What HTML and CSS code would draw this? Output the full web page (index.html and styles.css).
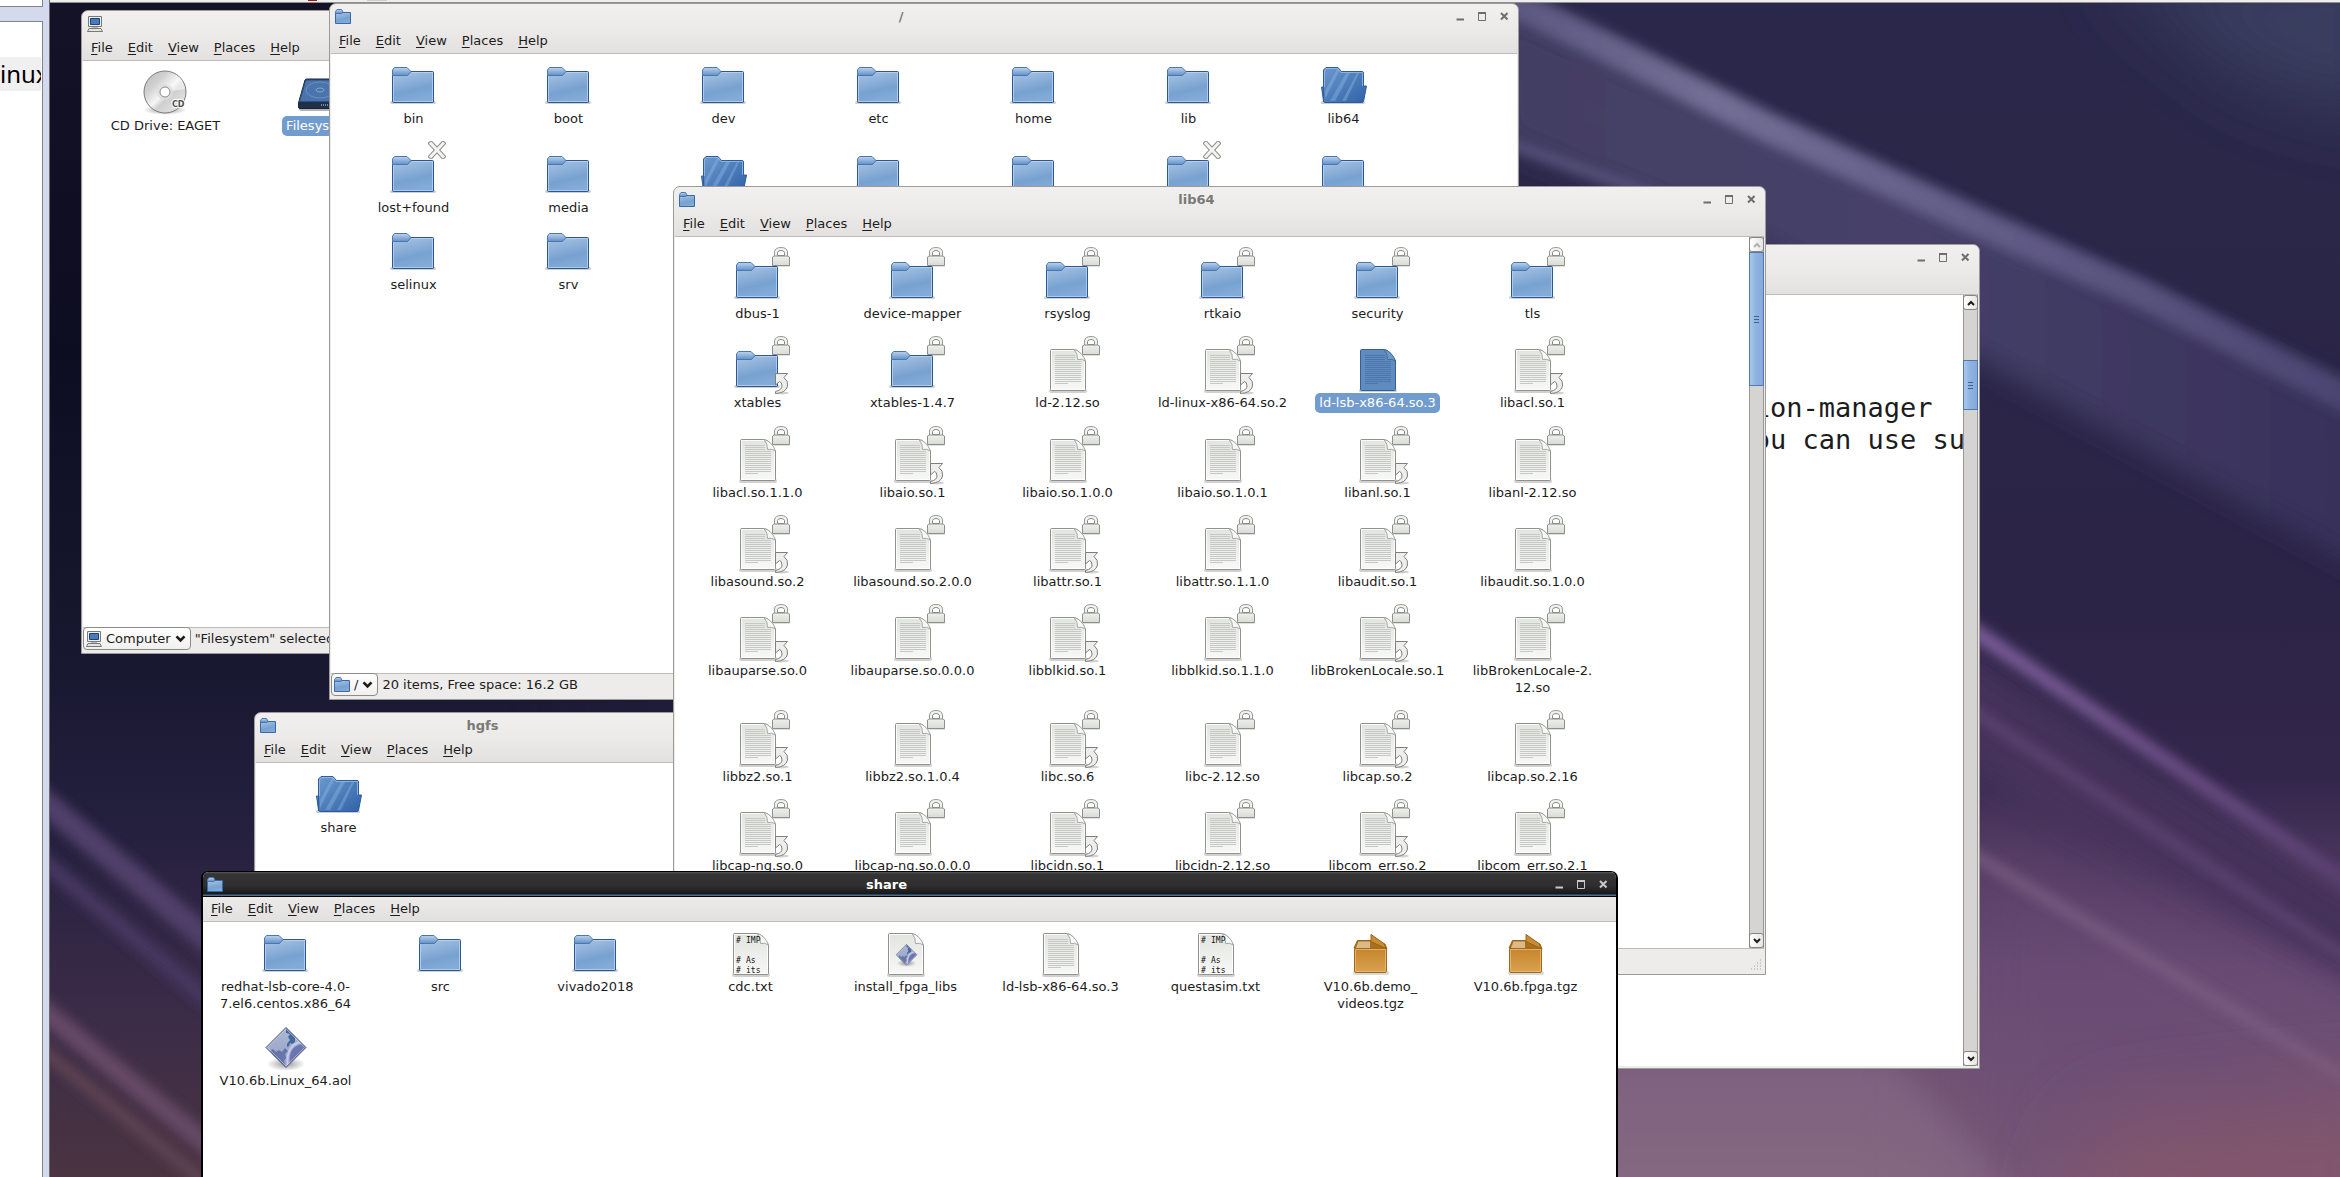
FILE: index.html
```html
<!DOCTYPE html>
<html lang="en">
<head>
    <meta charset="UTF-8">
    <meta name="viewport" content="width=device-width, initial-scale=1.0">
    <title>share</title>
    <link rel="stylesheet" href="styles.css">
</head>
<body>

    <!-- icon set -->
    <svg class="defs" aria-hidden="true">
        <defs>
            <linearGradient id="g-folder" x1="0" y1="0" x2="0.3" y2="1">
                <stop offset="0" stop-color="#aac5e4"/><stop offset="0.7" stop-color="#77a1d0"/><stop offset="1" stop-color="#82abd8"/>
            </linearGradient>
            <linearGradient id="g-tab" x1="0" y1="0" x2="0" y2="1">
                <stop offset="0" stop-color="#bfd3ec"/><stop offset="1" stop-color="#5b8bc5"/>
            </linearGradient>
            <linearGradient id="g-open" x1="0" y1="0" x2="1" y2="1">
                <stop offset="0" stop-color="#6d9bd0"/><stop offset="1" stop-color="#2f62a6"/>
            </linearGradient>
            <linearGradient id="g-doc" x1="0" y1="0" x2="0" y2="1">
                <stop offset="0" stop-color="#e2e4df"/><stop offset="1" stop-color="#f8f8f7"/>
            </linearGradient>
            <linearGradient id="g-lock" x1="0" y1="0" x2="0" y2="1">
                <stop offset="0" stop-color="#eef0ec"/><stop offset="1" stop-color="#d9dcd5"/>
            </linearGradient>
            <linearGradient id="g-box" x1="0" y1="0" x2="0" y2="1">
                <stop offset="0" stop-color="#c4852b"/><stop offset="1" stop-color="#dba251"/>
            </linearGradient>
            <linearGradient id="g-gear" x1="0" y1="0" x2="0" y2="1">
                <stop offset="0" stop-color="#a9bacf"/><stop offset="1" stop-color="#9a9ccb"/>
            </linearGradient>
            <linearGradient id="g-cd" x1="0" y1="0" x2="1" y2="1">
                <stop offset="0" stop-color="#b9b9b9"/><stop offset="0.3" stop-color="#d2d2d2"/><stop offset="0.5" stop-color="#f6f6f6"/><stop offset="0.6" stop-color="#cfcfcf"/><stop offset="1" stop-color="#ececec"/>
            </linearGradient>
            <radialGradient id="g-shadow">
                <stop offset="0" stop-color="#000" stop-opacity="0.4"/><stop offset="1" stop-color="#000" stop-opacity="0"/>
            </radialGradient>
        </defs>

        <symbol id="folder" viewBox="0 0 48 48">
            <rect x="0" y="38" width="46" height="3" rx="1.5" fill="#000" opacity="0.18"/>
            <path d="M2.5 9 Q2.5 8.5 4 8.5 H42.500 Q43.500 8.500 43.500 9.500 V39 Q43.500 39.500 42.500 39.500 H3.500 Q2.500 39.500 2.500 38.500 Z" fill="url(#g-folder)" stroke="#2c5796"/>
            <path d="M3.500 13 V38.500 H42.500 V9.500 H22" fill="none" stroke="#c5d8ee" opacity="0.7"/>
            <path d="M2.500 13 V7 L4.500 4.500 H17 L21 8.500 L17.500 12.500 H3 Z" fill="url(#g-tab)" stroke="#4678b4"/>
        </symbol>
        <symbol id="folder-open" viewBox="0 0 48 48">
            <rect x="1" y="38" width="44" height="3" rx="1.500" fill="#000" opacity="0.2"/>
            <path d="M3.500 39 V7 L6 4.500 H18 L21.500 8.500 H42 Q43.500 8.500 43.500 10 V23 H46.500 L43.500 38.500 Q43 39.500 42 39.500 H5 Q4 39.500 3.500 38 L1.500 24 H3.500 Z" fill="url(#g-open)" stroke="#2d5c9e"/>
            <path d="M5 28 L17 6 H20 L5 36 Z M10 38 L26 10 H30 L15 38 Z M22 38 L37 10 H39 L26 38 Z" fill="#9dc0e8" opacity="0.35"/>
            <path d="M4.500 24 V8 L6.500 5.500 H17.500 L21 9.500 H42.500 V23" fill="none" stroke="#a5c4e8" opacity="0.7"/>
        </symbol>
        <symbol id="doc" viewBox="0 0 48 48">
            <rect x="5" y="42" width="38" height="4" rx="2" fill="#000" opacity="0.18"/>
            <path d="M6.500 3.500 Q6.500 2.500 7.500 2.500 H30 Q36 3 41.500 14 V42.500 Q41.500 43.500 40.500 43.500 H7.500 Q6.500 43.500 6.500 42.500 Z" fill="url(#g-doc)" stroke="#90918d"/>
            <path d="M7.500 3.500 H30 M7.500 3.500 V42.500 H40.500 V15" fill="none" stroke="#fff" opacity="0.8"/>
            <path d="M30 2.500 Q34 7 33.500 12.500 Q38 11.500 41.500 14 Q38 4.500 30 2.500 Z" fill="#f7f7f5" stroke="#a9aaa6"/>
        </symbol>
        <symbol id="file" viewBox="0 0 48 48">
            <use href="#doc"/>
            <path d="M11 8.500 H31 M11 10.500 H31 M11 12.500 H31 M11 14.500 H37 M11 16.500 H37 M11 18.500 H37 M11 20.500 H37 M11 22.500 H37 M11 24.500 H37 M11 26.500 H37 M11 28.500 H37 M11 30.500 H37 M11 32.500 H37 M11 34.500 H37 M11 36.500 H24" stroke="#c6c8c3"/>
        </symbol>
        <symbol id="file-selected" viewBox="0 0 48 48">
            <rect x="5" y="42" width="38" height="3" rx="1.500" fill="#3a659d" opacity="0.3"/>
            <path d="M6.500 3.500 Q6.500 2.500 7.500 2.500 H30 Q36 3 41.500 14 V42.500 Q41.500 43.500 40.500 43.500 H7.500 Q6.500 43.500 6.500 42.500 Z" fill="#5f8bc0" stroke="#365f93"/>
            <path d="M30 2.500 Q34 7 33.500 12.500 Q38 11.500 41.500 14 Q38 4.500 30 2.500 Z" fill="#6f98ca" stroke="#426c9f"/>
            <path d="M11 8.500 H31 M11 10.500 H31 M11 12.500 H31 M11 14.500 H37 M11 16.500 H37 M11 18.500 H37 M11 20.500 H37 M11 22.500 H37 M11 24.500 H37 M11 26.500 H37 M11 28.500 H37 M11 30.500 H37 M11 32.500 H37 M11 34.500 H37 M11 36.500 H24" stroke="#4a75ab"/>
        </symbol>
        <symbol id="text" viewBox="0 0 48 48">
            <use href="#doc"/>
            <text class="preview" x="9" y="12">#</text><text class="preview" x="19" y="12">IMP</text>
            <text class="preview" x="9" y="32">#</text><text class="preview" x="19" y="32">As</text>
            <text class="preview" x="9" y="42">#</text><text class="preview" x="19" y="42">its</text>
        </symbol>
        <symbol id="gear" viewBox="0 0 48 48">
            <ellipse cx="24" cy="39" rx="19" ry="7" fill="url(#g-shadow)"/>
            <path d="M24 2.500 L44 22.500 L24 42.500 L4 22.500 Z" fill="url(#g-gear)"/>
            <path d="M24 3 L33 12 L33 17 L30 19 L28 18 L27 21 L25 22 L25 19 L28 15 L26 12 L28 9 L24 8 Z" fill="#44679c"/>
            <path d="M8 26 L11 24 L14 27 L17 25 L20 27 L23 23 L26 26 L23 29 L24 33 L22 36 L23 41 L12 31 Z" fill="#6676ab"/>
            <path d="M28 38 Q26 22 40 19 L43.500 22.500 Z" fill="#6c75b0"/>
            <path d="M25.500 40 Q24 21 38 17" fill="none" stroke="#c3cce6" stroke-width="2"/>
            <path d="M24 2.500 L44 22.500 L24 42.500 L4 22.500 Z" fill="none" stroke="#4b557c"/>
            <path d="M24 4 L42.500 22.500 L24 41 L5.500 22.500 Z" fill="none" stroke="#dfe5f2" opacity="0.45"/>
        </symbol>
        <symbol id="installer" viewBox="0 0 48 48">
            <use href="#doc"/>
            <use href="#gear" x="12" y="12" width="25" height="25"/>
        </symbol>
        <symbol id="archive" viewBox="0 0 48 48">
            <rect x="6" y="40" width="36" height="4" rx="2" fill="#000" opacity="0.15"/>
            <path d="M7 17 L10.500 9.500 H23 L38 13 L40 18 Z" fill="#a8701d" stroke="#9a6518"/>
            <path d="M9 17 L11.500 10.500 H23 V17 Z" fill="#dcb988"/>
            <path d="M24 3.500 L37 12.500 L39 17.500 L24 10.500 Z" fill="#c88c35" stroke="#9a6518"/>
            <path d="M7.500 17.500 H39.500 V40 Q39.500 41.500 38 41.500 H9 Q7.500 41.500 7.500 40 Z" fill="url(#g-box)" stroke="#a0691a"/>
            <path d="M8.500 18.500 H38.500 V40.500 H8.500 Z" fill="none" stroke="#e8bd7e" opacity="0.8"/>
        </symbol>
        <symbol id="cd" viewBox="0 0 48 48">
            <ellipse cx="23" cy="40" rx="22" ry="5" fill="url(#g-shadow)"/>
            <circle cx="23" cy="22" r="21" fill="url(#g-cd)" stroke="#7d7d7d"/>
            <path d="M23 22 L37 7 A20 20 0 0 1 43 19 Z" fill="#fff" opacity="0.5"/>
            <circle cx="23" cy="22" r="8" fill="#ddd" opacity="0.8"/>
            <circle cx="23" cy="22" r="5" fill="#fff" stroke="#8a8a8a"/>
            <text class="cd-mark" x="30" y="37">CD</text>
        </symbol>
        <symbol id="disk" viewBox="0 0 48 48">
            <rect x="2" y="36" width="45" height="5" rx="2" fill="#000" opacity="0.3"/>
            <path d="M1.500 33 L8 10 Q8.500 9 10 9 H38 Q39.500 9 40 10 L46.500 33 V37 Q46.500 38.500 45 38.500 H3 Q1.500 38.500 1.500 37 Z" fill="#1f3047" stroke="#16243a"/>
            <path d="M2.500 31.500 L8.500 11 Q9 10 10 10 H38 Q39 10 39.500 11 L45.500 31.500 Z" fill="#4a74ab" stroke="#2e517f"/>
            <ellipse cx="23" cy="20" rx="14" ry="8" fill="none" stroke="#6890c4"/>
            <ellipse cx="23" cy="20" rx="4" ry="2" fill="none" stroke="#7fa4d2"/>
            <path d="M24 35 H36" stroke="#6f8db3" stroke-width="2" stroke-dasharray="1 1"/>
        </symbol>

        <symbol id="lock" viewBox="0 0 18 20">
            <rect x="1" y="18" width="17" height="2" fill="#000" opacity="0.12"/>
            <path d="M2.500 9.500 V5 Q3 0.500 9 0.500 Q15 0.500 15.500 5 V9.500 Z" fill="#f2f3f0" stroke="#979994"/>
            <path d="M5.500 8.500 V5.500 Q6 3.500 9 3.500 Q12 3.500 12.500 5.500 V8.500 Z" fill="#fff" stroke="#888a85"/>
            <path d="M0.500 10 L2 9 H16 L17.500 10 V18.500 H0.500 Z" fill="url(#g-lock)" stroke="#8e908b"/>
        </symbol>
        <symbol id="link" viewBox="0 0 14 22">
            <ellipse cx="7" cy="20" rx="7" ry="1.500" fill="#000" opacity="0.18"/>
            <path d="M0.500 0.500 H12.500 L9 4.500 Q13.500 8 12.500 13 Q11 20 0.500 20.500 V18.500 Q7 17 7 13 Q7 9 4.500 8.500 L0.500 12 Z" fill="#eeefec" stroke="#7d7f7a"/>
        </symbol>
        <symbol id="denied" viewBox="0 0 18 18">
            <path d="M3 2.500 L15 15.500 M15 2.500 L3 15.500" stroke="#8e908b" stroke-width="5" stroke-linecap="square"/>
            <path d="M3 2.500 L15 15.500 M15 2.500 L3 15.500" stroke="#f4f5f3" stroke-width="3" stroke-linecap="square"/>
        </symbol>

        <symbol id="folder-small" viewBox="0 0 16 16">
            <path d="M0.500 3.500 H15.500 V14.500 H0.500 Z" fill="url(#g-folder)" stroke="#3a69a9"/>
            <path d="M0.500 4 V2.500 L2 0.500 H6.500 L8 3 L7 4.500 H0.500 Z" fill="url(#g-tab)" stroke="#4678b4"/>
        </symbol>
        <symbol id="computer-small" viewBox="0 0 16 16">
            <path d="M1.500 0.500 H14.500 V10.500 H1.500 Z" fill="#eceeea" stroke="#777974"/>
            <path d="M3.500 2.500 H12.500 V8.500 H3.500 Z" fill="#4a7abc" stroke="#1f4379"/>
            <path d="M5 11 H11 V12.500 H5 Z" fill="#b9bbb6"/>
            <path d="M2 12.500 H14 L15.500 15.500 H0.500 Z" fill="#e3e5e0" stroke="#777974"/>
        </symbol>
        <symbol id="minimize" viewBox="0 0 9 9"><path d="M0.500 7.500 H8" stroke="currentColor" stroke-width="2"/></symbol>
        <symbol id="maximize" viewBox="0 0 9 9"><path d="M0.500 1 V8.500 H7.500 V1" fill="none" stroke="currentColor"/><path d="M0 1 H8" stroke="currentColor" stroke-width="2"/></symbol>
        <symbol id="close" viewBox="0 0 9 9"><path d="M1 1 L7.500 7.500 M7.500 1 L1 7.500" stroke="currentColor" stroke-width="2"/></symbol>
        <symbol id="up" viewBox="0 0 8 6"><path d="M1 5 L4 2 L7 5" fill="none" stroke="currentColor" stroke-width="2"/></symbol>
        <symbol id="down" viewBox="0 0 8 6"><path d="M1 1 L4 4 L7 1" fill="none" stroke="currentColor" stroke-width="2"/></symbol>
    </svg>

    <!-- host application, left of the virtual screen -->
    <aside class="host">
        <div class="host-search"></div>
        <div class="host-list">
            <div class="host-entry">inux</div>
        </div>
    </aside>

    <div class="screen">
        <div class="panel"><i class="panel-red"></i><i class="panel-grey"></i></div>

        <main class="desktop">
            <svg class="wallpaper" viewBox="50 3 2290 1174" preserveAspectRatio="none" aria-hidden="true">
                <defs>
                    <linearGradient id="w-left" x1="0" y1="0" x2="0" y2="1">
                        <stop offset="0" stop-color="#131227"/><stop offset="0.3" stop-color="#0d0d22"/><stop offset="0.55" stop-color="#17172f"/><stop offset="0.7" stop-color="#24203e"/><stop offset="0.85" stop-color="#3a2b48"/><stop offset="1" stop-color="#4a3441"/>
                    </linearGradient>
                    <linearGradient id="w-right" x1="0" y1="0" x2="0" y2="1">
                        <stop offset="0" stop-color="#2a284a"/><stop offset="0.5" stop-color="#2b2446"/><stop offset="0.66" stop-color="#33264b"/><stop offset="0.82" stop-color="#674972"/><stop offset="1" stop-color="#7f6079"/>
                    </linearGradient>
                    <linearGradient id="w-mix" x1="0" y1="0" x2="1" y2="0">
                        <stop offset="0.2" stop-color="#000"/><stop offset="0.55" stop-color="#fff"/>
                    </linearGradient>
                    <linearGradient id="w-beam" gradientUnits="userSpaceOnUse" x1="1500" y1="0" x2="2340" y2="400">
                        <stop offset="0" stop-color="#5b567f"/><stop offset="0.25" stop-color="#726e95"/><stop offset="0.6" stop-color="#605b86"/><stop offset="1" stop-color="#4b4572"/>
                    </linearGradient>
                    <linearGradient id="w-haze" gradientUnits="userSpaceOnUse" x1="1500" y1="0" x2="2340" y2="0">
                        <stop offset="0" stop-color="#433e63"/><stop offset="0.5" stop-color="#464069"/><stop offset="1" stop-color="#37315a"/>
                    </linearGradient>
                    <linearGradient id="w-violet" gradientUnits="userSpaceOnUse" x1="1980" y1="630" x2="2340" y2="880">
                        <stop offset="0" stop-color="#7a5c98"/><stop offset="1" stop-color="#5a4070"/>
                    </linearGradient>
                    <mask id="w-mask"><rect x="50" y="0" width="2290" height="1180" fill="url(#w-mix)"/></mask>
                    <filter id="b6" filterUnits="userSpaceOnUse" x="-50" y="-100" width="2500" height="1400"><feGaussianBlur stdDeviation="6"/></filter>
                    <filter id="b14" filterUnits="userSpaceOnUse" x="-50" y="-100" width="2500" height="1400"><feGaussianBlur stdDeviation="14"/></filter>
                    <filter id="b40" filterUnits="userSpaceOnUse" x="-50" y="-100" width="2500" height="1400"><feGaussianBlur stdDeviation="40"/></filter>
                </defs>
                <rect x="50" y="0" width="2290" height="1180" fill="url(#w-left)"/>
                <rect x="50" y="0" width="2290" height="1180" fill="url(#w-right)" mask="url(#w-mask)"/>
                <path d="M2100 -40 H2400 V120 L2250 80 Z" fill="#3b3f62" filter="url(#b40)"/>
                <path d="M1490 0 L1768 128 L1982 225 L2400 420 V590 L1982 360 L1760 245 L1500 140 Z" fill="url(#w-haze)" filter="url(#b14)"/>
                <path d="M1490 -8 L1607 48 L1768 128 L1982 225 L2143 295 L2380 415" fill="none" stroke="url(#w-beam)" stroke-width="30" filter="url(#b6)"/>
                <path d="M1500 140 L1640 190 L1760 240" fill="none" stroke="#625c88" stroke-width="8" filter="url(#b6)"/>
                <path d="M1950 640 L2400 930 V1010 L1950 760 Z" fill="#44325a" filter="url(#b14)"/>
                <path d="M1950 780 L2400 1040 V1240 H1950 Z" fill="#6a4b74" opacity="0.5" filter="url(#b40)"/>
                <path d="M1950 615 L2400 918" stroke="url(#w-violet)" stroke-width="16" filter="url(#b6)"/>
                <path d="M1950 696 L2400 992" stroke="#5f4472" stroke-width="10" filter="url(#b6)"/>
                <path d="M1950 841 L2400 1110" stroke="#7d5f83" stroke-width="12" opacity="0.8" filter="url(#b6)"/>
                <path d="M1560 1060 H1890 L2020 1200 H1560 Z" fill="#8a7089" opacity="0.5" filter="url(#b14)"/>
                <path d="M2100 1120 L2400 1090 V1240 H2050 Z" fill="#85576a" opacity="0.8" filter="url(#b40)"/>
                <path d="M30 790 L220 950" stroke="#51406a" stroke-width="24" filter="url(#b6)"/>
                <path d="M30 850 L220 1010" stroke="#473762" stroke-width="16" filter="url(#b6)"/>
                <path d="M30 1000 L220 1155" stroke="#664a66" stroke-width="20" filter="url(#b6)"/>
                <path d="M30 1040 L220 1195" stroke="#604453" stroke-width="12" filter="url(#b6)"/>
            </svg>

            <!-- Terminal -->
            <section class="window terminal">
                <header class="titlebar">
                    <h2 class="title"></h2>
                    <div class="controls">
                        <button aria-label="Minimize"><svg><use href="#minimize"/></svg></button>
                        <button aria-label="Maximize"><svg><use href="#maximize"/></svg></button>
                        <button aria-label="Close"><svg><use href="#close"/></svg></button>
                    </div>
                </header>
                <nav class="menubar"></nav>
                <div class="body">
                    <pre class="output">ion-manager  
ou can use su</pre>
                    <div class="scrollbar">
                        <button class="arrow" aria-label="Scroll up"><svg><use href="#up"/></svg></button>
                        <div class="track"><div class="thumb"></div></div>
                        <button class="arrow" aria-label="Scroll down"><svg><use href="#down"/></svg></button>
                    </div>
                </div>
            </section>

            <!-- Computer -->
            <section class="window computer">
                <header class="titlebar">
                    <svg class="small-icon"><use href="#computer-small"/></svg>
                    <h2 class="title"></h2>
                    <div class="controls"></div>
                </header>
                <nav class="menubar">
                    <button><u>F</u>ile</button><button><u>E</u>dit</button><button><u>V</u>iew</button><button><u>P</u>laces</button><button><u>H</u>elp</button>
                </nav>
                <div class="body">
                    <div class="files">
                        <div class="row">
                            <a class="item" href="#"><span class="icon"><svg><use href="#cd"/></svg></span><span class="label">CD Drive: EAGET</span></a>
                            <a class="item selected" href="#"><span class="icon"><svg><use href="#disk"/></svg></span><span class="label">Filesystem</span></a>
                        </div>
                    </div>
                </div>
                <footer class="statusbar">
                    <button class="location"><svg class="small-icon"><use href="#computer-small"/></svg>Computer<svg class="chevron"><use href="#down"/></svg></button>
                    <span>"Filesystem" selected</span>
                </footer>
            </section>

            <!-- Root folder -->
            <section class="window root">
                <header class="titlebar">
                    <svg class="small-icon"><use href="#folder-small"/></svg>
                    <h2 class="title">/</h2>
                    <div class="controls">
                        <button aria-label="Minimize"><svg><use href="#minimize"/></svg></button>
                        <button aria-label="Maximize"><svg><use href="#maximize"/></svg></button>
                        <button aria-label="Close"><svg><use href="#close"/></svg></button>
                    </div>
                </header>
                <nav class="menubar">
                    <button><u>F</u>ile</button><button><u>E</u>dit</button><button><u>V</u>iew</button><button><u>P</u>laces</button><button><u>H</u>elp</button>
                </nav>
                <div class="body">
                    <div class="files">
                        <div class="row">
                            <a class="item" href="#"><span class="icon"><svg><use href="#folder"/></svg></span><span class="label">bin</span></a>
                            <a class="item" href="#"><span class="icon"><svg><use href="#folder"/></svg></span><span class="label">boot</span></a>
                            <a class="item" href="#"><span class="icon"><svg><use href="#folder"/></svg></span><span class="label">dev</span></a>
                            <a class="item" href="#"><span class="icon"><svg><use href="#folder"/></svg></span><span class="label">etc</span></a>
                            <a class="item" href="#"><span class="icon"><svg><use href="#folder"/></svg></span><span class="label">home</span></a>
                            <a class="item" href="#"><span class="icon"><svg><use href="#folder"/></svg></span><span class="label">lib</span></a>
                            <a class="item" href="#"><span class="icon"><svg><use href="#folder-open"/></svg></span><span class="label">lib64</span></a>
                        </div>
                        <div class="row emblems">
                            <a class="item" href="#"><span class="icon"><svg><use href="#folder"/></svg><svg class="denied"><use href="#denied"/></svg></span><span class="label">lost+found</span></a>
                            <a class="item" href="#"><span class="icon"><svg><use href="#folder"/></svg></span><span class="label">media</span></a>
                            <a class="item" href="#" aria-label="mnt"><span class="icon"><svg><use href="#folder-open"/></svg></span></a>
                            <a class="item" href="#" aria-label="opt"><span class="icon"><svg><use href="#folder"/></svg></span></a>
                            <a class="item" href="#" aria-label="proc"><span class="icon"><svg><use href="#folder"/></svg></span></a>
                            <a class="item" href="#" aria-label="root"><span class="icon"><svg><use href="#folder"/></svg><svg class="denied"><use href="#denied"/></svg></span></a>
                            <a class="item" href="#" aria-label="sbin"><span class="icon"><svg><use href="#folder"/></svg></span></a>
                        </div>
                        <div class="row">
                            <a class="item" href="#"><span class="icon"><svg><use href="#folder"/></svg></span><span class="label">selinux</span></a>
                            <a class="item" href="#"><span class="icon"><svg><use href="#folder"/></svg></span><span class="label">srv</span></a>
                        </div>
                    </div>
                </div>
                <footer class="statusbar">
                    <button class="location"><svg class="small-icon"><use href="#folder-small"/></svg>/<svg class="chevron"><use href="#down"/></svg></button>
                    <span>20 items, Free space: 16.2 GB</span>
                </footer>
            </section>

            <!-- hgfs -->
            <section class="window hgfs">
                <header class="titlebar">
                    <svg class="small-icon"><use href="#folder-small"/></svg>
                    <h2 class="title">hgfs</h2>
                    <div class="controls"></div>
                </header>
                <nav class="menubar">
                    <button><u>F</u>ile</button><button><u>E</u>dit</button><button><u>V</u>iew</button><button><u>P</u>laces</button><button><u>H</u>elp</button>
                </nav>
                <div class="body">
                    <div class="files">
                        <div class="row">
                            <a class="item" href="#"><span class="icon"><svg><use href="#folder-open"/></svg></span><span class="label">share</span></a>
                        </div>
                    </div>
                </div>
            </section>

            <!-- lib64 -->
            <section class="window lib64">
                <header class="titlebar">
                    <svg class="small-icon"><use href="#folder-small"/></svg>
                    <h2 class="title">lib64</h2>
                    <div class="controls">
                        <button aria-label="Minimize"><svg><use href="#minimize"/></svg></button>
                        <button aria-label="Maximize"><svg><use href="#maximize"/></svg></button>
                        <button aria-label="Close"><svg><use href="#close"/></svg></button>
                    </div>
                </header>
                <nav class="menubar">
                    <button><u>F</u>ile</button><button><u>E</u>dit</button><button><u>V</u>iew</button><button><u>P</u>laces</button><button><u>H</u>elp</button>
                </nav>
                <div class="body">
                    <div class="files">
                        <div class="row emblems">
                            <a class="item" href="#"><span class="icon"><svg><use href="#folder"/></svg><svg class="lock"><use href="#lock"/></svg></span><span class="label">dbus-1</span></a>
                            <a class="item" href="#"><span class="icon"><svg><use href="#folder"/></svg><svg class="lock"><use href="#lock"/></svg></span><span class="label">device-mapper</span></a>
                            <a class="item" href="#"><span class="icon"><svg><use href="#folder"/></svg><svg class="lock"><use href="#lock"/></svg></span><span class="label">rsyslog</span></a>
                            <a class="item" href="#"><span class="icon"><svg><use href="#folder"/></svg><svg class="lock"><use href="#lock"/></svg></span><span class="label">rtkaio</span></a>
                            <a class="item" href="#"><span class="icon"><svg><use href="#folder"/></svg><svg class="lock"><use href="#lock"/></svg></span><span class="label">security</span></a>
                            <a class="item" href="#"><span class="icon"><svg><use href="#folder"/></svg><svg class="lock"><use href="#lock"/></svg></span><span class="label">tls</span></a>
                        </div>
                        <div class="row emblems">
                            <a class="item" href="#"><span class="icon"><svg><use href="#folder"/></svg><svg class="lock"><use href="#lock"/></svg><svg class="link"><use href="#link"/></svg></span><span class="label">xtables</span></a>
                            <a class="item" href="#"><span class="icon"><svg><use href="#folder"/></svg><svg class="lock"><use href="#lock"/></svg></span><span class="label">xtables-1.4.7</span></a>
                            <a class="item" href="#"><span class="icon"><svg><use href="#file"/></svg><svg class="lock"><use href="#lock"/></svg></span><span class="label">ld-2.12.so</span></a>
                            <a class="item" href="#"><span class="icon"><svg><use href="#file"/></svg><svg class="lock"><use href="#lock"/></svg><svg class="link"><use href="#link"/></svg></span><span class="label">ld-linux-x86-64.so.2</span></a>
                            <a class="item selected" href="#"><span class="icon"><svg><use href="#file-selected"/></svg></span><span class="label">ld-lsb-x86-64.so.3</span></a>
                            <a class="item" href="#"><span class="icon"><svg><use href="#file"/></svg><svg class="lock"><use href="#lock"/></svg><svg class="link"><use href="#link"/></svg></span><span class="label">libacl.so.1</span></a>
                        </div>
                        <div class="row emblems">
                            <a class="item" href="#"><span class="icon"><svg><use href="#file"/></svg><svg class="lock"><use href="#lock"/></svg></span><span class="label">libacl.so.1.1.0</span></a>
                            <a class="item" href="#"><span class="icon"><svg><use href="#file"/></svg><svg class="lock"><use href="#lock"/></svg><svg class="link"><use href="#link"/></svg></span><span class="label">libaio.so.1</span></a>
                            <a class="item" href="#"><span class="icon"><svg><use href="#file"/></svg><svg class="lock"><use href="#lock"/></svg></span><span class="label">libaio.so.1.0.0</span></a>
                            <a class="item" href="#"><span class="icon"><svg><use href="#file"/></svg><svg class="lock"><use href="#lock"/></svg></span><span class="label">libaio.so.1.0.1</span></a>
                            <a class="item" href="#"><span class="icon"><svg><use href="#file"/></svg><svg class="lock"><use href="#lock"/></svg><svg class="link"><use href="#link"/></svg></span><span class="label">libanl.so.1</span></a>
                            <a class="item" href="#"><span class="icon"><svg><use href="#file"/></svg><svg class="lock"><use href="#lock"/></svg></span><span class="label">libanl-2.12.so</span></a>
                        </div>
                        <div class="row emblems">
                            <a class="item" href="#"><span class="icon"><svg><use href="#file"/></svg><svg class="lock"><use href="#lock"/></svg><svg class="link"><use href="#link"/></svg></span><span class="label">libasound.so.2</span></a>
                            <a class="item" href="#"><span class="icon"><svg><use href="#file"/></svg><svg class="lock"><use href="#lock"/></svg></span><span class="label">libasound.so.2.0.0</span></a>
                            <a class="item" href="#"><span class="icon"><svg><use href="#file"/></svg><svg class="lock"><use href="#lock"/></svg><svg class="link"><use href="#link"/></svg></span><span class="label">libattr.so.1</span></a>
                            <a class="item" href="#"><span class="icon"><svg><use href="#file"/></svg><svg class="lock"><use href="#lock"/></svg></span><span class="label">libattr.so.1.1.0</span></a>
                            <a class="item" href="#"><span class="icon"><svg><use href="#file"/></svg><svg class="lock"><use href="#lock"/></svg><svg class="link"><use href="#link"/></svg></span><span class="label">libaudit.so.1</span></a>
                            <a class="item" href="#"><span class="icon"><svg><use href="#file"/></svg><svg class="lock"><use href="#lock"/></svg></span><span class="label">libaudit.so.1.0.0</span></a>
                        </div>
                        <div class="row emblems">
                            <a class="item" href="#"><span class="icon"><svg><use href="#file"/></svg><svg class="lock"><use href="#lock"/></svg><svg class="link"><use href="#link"/></svg></span><span class="label">libauparse.so.0</span></a>
                            <a class="item" href="#"><span class="icon"><svg><use href="#file"/></svg><svg class="lock"><use href="#lock"/></svg></span><span class="label">libauparse.so.0.0.0</span></a>
                            <a class="item" href="#"><span class="icon"><svg><use href="#file"/></svg><svg class="lock"><use href="#lock"/></svg><svg class="link"><use href="#link"/></svg></span><span class="label">libblkid.so.1</span></a>
                            <a class="item" href="#"><span class="icon"><svg><use href="#file"/></svg><svg class="lock"><use href="#lock"/></svg></span><span class="label">libblkid.so.1.1.0</span></a>
                            <a class="item" href="#"><span class="icon"><svg><use href="#file"/></svg><svg class="lock"><use href="#lock"/></svg><svg class="link"><use href="#link"/></svg></span><span class="label">libBrokenLocale.so.1</span></a>
                            <a class="item" href="#"><span class="icon"><svg><use href="#file"/></svg><svg class="lock"><use href="#lock"/></svg></span><span class="label">libBrokenLocale-2.<br>12.so</span></a>
                        </div>
                        <div class="row emblems">
                            <a class="item" href="#"><span class="icon"><svg><use href="#file"/></svg><svg class="lock"><use href="#lock"/></svg><svg class="link"><use href="#link"/></svg></span><span class="label">libbz2.so.1</span></a>
                            <a class="item" href="#"><span class="icon"><svg><use href="#file"/></svg><svg class="lock"><use href="#lock"/></svg></span><span class="label">libbz2.so.1.0.4</span></a>
                            <a class="item" href="#"><span class="icon"><svg><use href="#file"/></svg><svg class="lock"><use href="#lock"/></svg><svg class="link"><use href="#link"/></svg></span><span class="label">libc.so.6</span></a>
                            <a class="item" href="#"><span class="icon"><svg><use href="#file"/></svg><svg class="lock"><use href="#lock"/></svg></span><span class="label">libc-2.12.so</span></a>
                            <a class="item" href="#"><span class="icon"><svg><use href="#file"/></svg><svg class="lock"><use href="#lock"/></svg><svg class="link"><use href="#link"/></svg></span><span class="label">libcap.so.2</span></a>
                            <a class="item" href="#"><span class="icon"><svg><use href="#file"/></svg><svg class="lock"><use href="#lock"/></svg></span><span class="label">libcap.so.2.16</span></a>
                        </div>
                        <div class="row emblems">
                            <a class="item" href="#"><span class="icon"><svg><use href="#file"/></svg><svg class="lock"><use href="#lock"/></svg><svg class="link"><use href="#link"/></svg></span><span class="label">libcap-ng.so.0</span></a>
                            <a class="item" href="#"><span class="icon"><svg><use href="#file"/></svg><svg class="lock"><use href="#lock"/></svg></span><span class="label">libcap-ng.so.0.0.0</span></a>
                            <a class="item" href="#"><span class="icon"><svg><use href="#file"/></svg><svg class="lock"><use href="#lock"/></svg><svg class="link"><use href="#link"/></svg></span><span class="label">libcidn.so.1</span></a>
                            <a class="item" href="#"><span class="icon"><svg><use href="#file"/></svg><svg class="lock"><use href="#lock"/></svg></span><span class="label">libcidn-2.12.so</span></a>
                            <a class="item" href="#"><span class="icon"><svg><use href="#file"/></svg><svg class="lock"><use href="#lock"/></svg><svg class="link"><use href="#link"/></svg></span><span class="label">libcom_err.so.2</span></a>
                            <a class="item" href="#"><span class="icon"><svg><use href="#file"/></svg><svg class="lock"><use href="#lock"/></svg></span><span class="label">libcom_err.so.2.1</span></a>
                        </div>
                    </div>
                    <div class="scrollbar">
                        <button class="arrow" aria-label="Scroll up" disabled><svg><use href="#up"/></svg></button>
                        <div class="track"><div class="thumb"></div></div>
                        <button class="arrow" aria-label="Scroll down"><svg><use href="#down"/></svg></button>
                    </div>
                </div>
                <footer class="statusbar">
                    <svg class="grip" viewBox="0 0 12 12"><path d="M10 1h1M7 4h1M10 4h1M4 7h1M7 7h1M10 7h1M1 10h1M4 10h1M7 10h1M10 10h1" stroke="#a5a4a1"/></svg>
                </footer>
            </section>

            <!-- share -->
            <section class="window share active">
                <header class="titlebar">
                    <svg class="small-icon"><use href="#folder-small"/></svg>
                    <h2 class="title">share</h2>
                    <div class="controls">
                        <button aria-label="Minimize"><svg><use href="#minimize"/></svg></button>
                        <button aria-label="Maximize"><svg><use href="#maximize"/></svg></button>
                        <button aria-label="Close"><svg><use href="#close"/></svg></button>
                    </div>
                </header>
                <nav class="menubar">
                    <button><u>F</u>ile</button><button><u>E</u>dit</button><button><u>V</u>iew</button><button><u>P</u>laces</button><button><u>H</u>elp</button>
                </nav>
                <div class="body">
                    <div class="files">
                        <div class="row">
                            <a class="item" href="#"><span class="icon"><svg><use href="#folder"/></svg></span><span class="label">redhat-lsb-core-4.0-<br>7.el6.centos.x86_64</span></a>
                            <a class="item" href="#"><span class="icon"><svg><use href="#folder"/></svg></span><span class="label">src</span></a>
                            <a class="item" href="#"><span class="icon"><svg><use href="#folder"/></svg></span><span class="label">vivado2018</span></a>
                            <a class="item" href="#"><span class="icon"><svg><use href="#text"/></svg></span><span class="label">cdc.txt</span></a>
                            <a class="item" href="#"><span class="icon"><svg><use href="#installer"/></svg></span><span class="label">install_fpga_libs</span></a>
                            <a class="item" href="#"><span class="icon"><svg><use href="#file"/></svg></span><span class="label">ld-lsb-x86-64.so.3</span></a>
                            <a class="item" href="#"><span class="icon"><svg><use href="#text"/></svg></span><span class="label">questasim.txt</span></a>
                            <a class="item" href="#"><span class="icon"><svg><use href="#archive"/></svg></span><span class="label">V10.6b.demo_<br>videos.tgz</span></a>
                            <a class="item" href="#"><span class="icon"><svg><use href="#archive"/></svg></span><span class="label">V10.6b.fpga.tgz</span></a>
                        </div>
                        <div class="row">
                            <a class="item" href="#"><span class="icon"><svg><use href="#gear"/></svg></span><span class="label">V10.6b.Linux_64.aol</span></a>
                        </div>
                    </div>
                </div>
            </section>
        </main>
    </div>

</body>
</html>
```
FILE: styles.css
```css
* {
    box-sizing: border-box;
}

body {
    margin: 0;
    height: 100vh;
    display: flex;
    overflow: hidden;
    font-family: "DejaVu Sans", sans-serif;
    font-size: 13px;
    line-height: 17px;
    color: #1c1c1c;
    background-color: #d4d9ee;
}

button {
    font: inherit;
    color: inherit;
    background: none;
    border: none;
    padding: 0;
    cursor: pointer;
}

svg {
    display: block;
}

.defs {
    position: absolute;
    width: 0;
    height: 0;
}

.preview {
    font-family: "DejaVu Sans Mono", monospace;
    font-size: 8px;
    fill: #111;
}

.cd-mark {
    font-size: 8px;
    font-weight: bold;
    fill: #4c4c4c;
    stroke: #fff;
    stroke-width: 2px;
    paint-order: stroke;
}

/* host application */
.host {
    flex: 0 0 50px;
    min-width: 0;
    display: flex;
    flex-direction: column;
    gap: 14px;
    padding-right: 6px;
    border-right: 1px solid #6b6b6b;
}

.host-search,
.host-list {
    background-color: #fff;
    border: 1px solid #82838c;
    border-left: none;
}

.host-search {
    height: 7px;
    border-top: none;
}

.host-list {
    flex: 1;
    border-bottom: none;
    padding-top: 35px;
}

.host-entry {
    height: 34px;
    margin-right: 1px;
    overflow: hidden;
    background-color: #f0f0f0;
    color: #000;
    font-family: "Noto Sans", sans-serif;
    font-size: 24px;
    line-height: 34px;
}

/* virtual screen */
.screen {
    flex: 1;
    min-width: 0;
    display: flex;
    flex-direction: column;
}

.panel {
    flex: 0 0 3px;
    display: flex;
    gap: 50px;
    padding-left: 258px;
    background-color: #efeeec;
    border-bottom: 1px solid #8f8f8d;
}

.panel-red,
.panel-grey {
    height: 1px;
    width: 9px;
    background-color: #a81616;
}

.panel-grey {
    width: 20px;
    background-color: #cfcecb;
}

.desktop {
    flex: 1;
    position: relative;
    overflow: hidden;
}

.wallpaper {
    width: 100%;
    height: 100%;
}

/* windows */
.window {
    position: absolute;
    display: flex;
    flex-direction: column;
    padding: 0 1px;
    overflow: hidden;
    border: 1px solid #9c9b99;
    border-radius: 7px 7px 0 0;
    background: #edeceb linear-gradient(#f1f0ef, #ebeae8 26px, #e2e1df 50px, #edeceb 51px) no-repeat;
}

.computer { left: 31px; top: 7px; width: 640px; height: 644px; }
.root { left: 279px; top: 0; width: 1190px; height: 697px; }
.terminal { left: 1140px; top: 241px; width: 790px; height: 825px; padding-bottom: 2px; }
.hgfs { left: 204px; top: 709px; width: 503px; height: 400px; }
.lib64 { left: 623px; top: 183px; width: 1093px; height: 789px; }
.share { left: 151px; top: 868px; width: 1417px; bottom: 0; }

.titlebar {
    flex: 0 0 25px;
    display: flex;
    align-items: center;
    padding-left: 4px;
}

.small-icon {
    flex: none;
    width: 16px;
    height: 16px;
}

.title {
    flex: 1;
    margin: 0;
    padding-left: 2px;
    font-size: 13px;
    font-weight: bold;
    text-align: center;
    color: #7b7976;
}

.controls {
    flex: 0 0 68px;
    display: flex;
    padding-right: 2px;
    color: #6f6e6b;
}

.controls button {
    flex: 1;
    display: grid;
    place-items: center;
}

.controls svg {
    width: 9px;
    height: 9px;
}

.menubar {
    flex: 0 0 25px;
    display: flex;
    align-items: center;
    gap: 15px;
    padding: 0 0 1px 8px;
    border-bottom: 1px solid #bdbcb9;
}

.menubar u {
    text-underline-offset: 2px;
}

.body {
    flex: 1;
    min-height: 0;
    display: flex;
    background-color: #fff;
}

.active {
    border: 2px solid #000;
    border-top-width: 1px;
    border-bottom: none;
    padding: 0;
    background: #e9e8e7;
}

.active .titlebar {
    background: linear-gradient(#5a5a5a, #353535 2px, #2e2e2e 14px, #181818 22px, #4d6a8f 23px, #4d6a8f 24px, #000 24px);
}

.active .title {
    color: #fff;
}

.active .controls {
    color: #c9c9c9;
}

.active .menubar {
    background: linear-gradient(#ecebea, #e2e1df);
}

/* icon view */
.files {
    flex: 1;
    min-width: 0;
    padding: 9px 0 0 5px;
    overflow: hidden;
}

.row {
    display: flex;
    align-items: flex-start;
    padding-bottom: 12px;
}

.row.emblems {
    padding-top: 12px;
}

.item {
    flex: 0 0 155px;
    display: flex;
    flex-direction: column;
    align-items: center;
    color: inherit;
    text-align: center;
    text-decoration: none;
    white-space: nowrap;
}

.icon {
    position: relative;
    width: 48px;
    height: 48px;
}

.icon svg {
    width: 48px;
    height: 48px;
}

.icon .lock,
.icon .denied,
.icon .link {
    position: absolute;
    left: 38px;
    top: -11px;
    width: 18px;
    height: 20px;
}

.icon .denied {
    height: 18px;
}

.icon .link {
    left: 41px;
    top: 26px;
    width: 14px;
    height: 22px;
}

.label {
    margin: -1px 0 1px;
}

.selected .label {
    margin: -2px 0 0;
    padding: 1px 4px 2px;
    border-radius: 5px;
    background-color: #729bce;
    color: #fff;
}

/* status bar */
.statusbar {
    flex: 0 0 26px;
    display: flex;
    align-items: flex-start;
    gap: 4px;
    border-top: 1px solid #bdbcb9;
    line-height: 21px;
    white-space: nowrap;
}

.location {
    height: 23px;
    margin-top: -1px;
    display: flex;
    align-items: center;
    gap: 4px;
    padding: 0 4px 0 2px;
    border: 1px solid #8c8b88;
    border-radius: 4px;
    background: linear-gradient(#fff, #f1f0ef);
}

.chevron {
    width: 11px;
    height: 8px;
}

.grip {
    width: 12px;
    height: 12px;
    margin: 10px 2px 0 auto;
}

/* scroll bar */
.scrollbar {
    flex: 0 0 15px;
    position: relative;
    display: flex;
    flex-direction: column;
    border: 1px solid #989795;
    border-width: 0 1px;
    background-color: #d5d4d2;
}

.arrow {
    flex: 0 0 15px;
    display: grid;
    place-items: center;
    margin: 0 -1px;
    border: 1px solid #868583;
    border-radius: 3px;
    background: linear-gradient(90deg, #fff, #e6e5e3);
}

.arrow svg {
    width: 8px;
    height: 6px;
}

.arrow:disabled {
    color: #b3b2af;
}

.track {
    flex: 1;
}

.thumb {
    height: 134px;
    margin: 0 -1px;
    border: 1px solid #5079ad;
    background:
        repeating-linear-gradient(#3f6396 0 1px, transparent 1px 3px) center / 5px 7px no-repeat,
        linear-gradient(90deg, #a9c7ec, #8fb3e1 45%, #86a9db);
}

.terminal .track {
    padding-top: 50px;
}

.terminal .thumb {
    height: 50px;
}

.output {
    flex: 1;
    margin: 0 -2px 0 0;
    padding-top: 97px;
    overflow: hidden;
    text-align: right;
    font-family: "DejaVu Sans Mono", monospace;
    font-size: 27px;
    line-height: 32px;
}
```
